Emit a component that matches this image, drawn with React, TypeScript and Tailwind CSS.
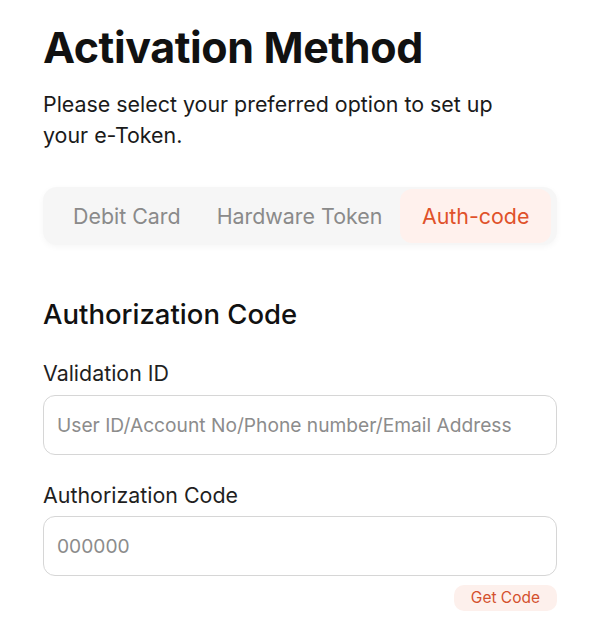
import { useState } from 'react';

const tabs = ['Debit Card', 'Hardware Token', 'Auth-code'];

export default function App() {
  const [active, setActive] = useState('Auth-code');

  return (
    <div className="min-h-screen bg-white font-['Inter',sans-serif] text-[#111]">
      <div className="w-[514px] ml-[43px] pt-[21px]">
        <h1 className="text-[43px] font-bold leading-[52px] tracking-[-0.4px]">Activation Method</h1>
        <p className="mt-[16px] max-w-[470px] text-[21.4px] leading-[31px] text-[#1a1a1a]">
          Please select your preferred option to set up your e-Token.
        </p>

        <div className="mt-[36px] flex items-center h-[58px] rounded-[14px] bg-[#f6f6f6] pl-[12px] pr-[6px] shadow-[0_2px_6px_rgba(0,0,0,0.04)]">
          {tabs.map((t) => (
            <button
              key={t}
              onClick={() => setActive(t)}
              className={
                t === active
                  ? 'h-[54px] flex-1 rounded-[12px] bg-[#fff1ed] text-[21.4px] text-[#e0522a]'
                  : 'h-[54px] px-[18px] rounded-[12px] text-[21.4px] text-[#8a8a8a]'
              }
            >
              {t}
            </button>
          ))}
        </div>

        <h2 className="mt-[51px] text-[27.5px] font-medium leading-[36px] text-[#111]">Authorization Code</h2>

        <label className="block mt-[27px] text-[21.4px] leading-[28px] text-[#1f1f1f]">Validation ID</label>
        <input
          className="mt-[8px] w-full h-[60px] rounded-[12px] border border-[#d6d6d6] px-[13px] text-[19.2px] placeholder:text-[#8c8c8c] outline-none"
          placeholder="User ID/Account No/Phone number/Email Address"
        />

        <label className="block mt-[26px] text-[21.4px] leading-[28px] text-[#1f1f1f]">Authorization Code</label>
        <input
          className="mt-[7px] w-full h-[60px] rounded-[12px] border border-[#d6d6d6] px-[13px] text-[19.2px] placeholder:text-[#8c8c8c] outline-none"
          placeholder="000000"
        />

        <div className="mt-[9px] flex justify-end">
          <button className="h-[26px] px-[17px] rounded-[10px] bg-[#fdf0ec] text-[15.5px] text-[#d4502e]">Get Code</button>
        </div>
      </div>
    </div>
  );
}
